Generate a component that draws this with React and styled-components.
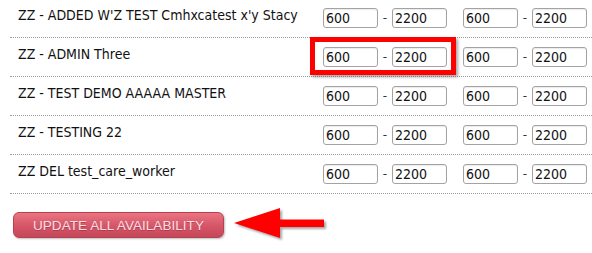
import styled, { createGlobalStyle } from 'styled-components';

const GlobalStyle = createGlobalStyle`
  html, body {
    margin: 0;
    padding: 0;
    background: #fff;
  }
`;

const Page = styled.div`
  width: 592px;
  height: 253px;
  overflow: hidden;
  padding-left: 10px;
  box-sizing: border-box;
`;

const Table = styled.div`
  margin-top: -1px;
`;

const Row = styled.div`
  display: flex;
  align-items: center;
  padding: 9px 5px 9px 8px;
  border-bottom: 1px dotted #9a9a9a;
`;

const Label = styled.div`
  flex: 1;
  padding-bottom: 6px;
  line-height: 14px;
  font-family: 'DejaVu Sans Condensed', 'DejaVu Sans', sans-serif;
  font-size: 14px;
  color: #111;
  white-space: nowrap;
`;

const Ranges = styled.div`
  display: flex;
  gap: 16px;
`;

const Range = styled.div`
  display: flex;
  align-items: center;
  position: relative;
`;

const Highlight = styled.div`
  position: absolute;
  left: -13px;
  right: -9px;
  top: -10px;
  bottom: -8px;
  border: 5px solid #ff0000;
  box-shadow: 2px 2px 3px rgba(0, 0, 0, 0.35);
  pointer-events: none;
`;

const TimeInput = styled.input`
  width: 55px;
  height: 20px;
  box-sizing: border-box;
  border: 1px solid #a3a3a3;
  border-radius: 3px;
  padding: 0 2px;
  font-family: 'DejaVu Sans Condensed', 'DejaVu Sans', sans-serif;
  font-size: 14px;
  color: #111;
  background: #fff;
  box-shadow: inset 0 1px 1px rgba(0, 0, 0, 0.08);
  outline: none;
`;

const Dash = styled.span`
  width: 14px;
  line-height: 14px;
  text-align: center;
  font-family: 'DejaVu Sans', sans-serif;
  font-size: 12px;
  color: #333;
`;

const Footer = styled.div`
  display: flex;
  align-items: center;
  gap: 10px;
  padding: 13px 0 0 3px;
`;

const UpdateButton = styled.button`
  width: 211px;
  height: 26px;
  border: 1px solid #b8404f;
  border-radius: 6px;
  background: linear-gradient(#ea7482, #d55566 55%, #c4475a);
  color: #f6dfe3;
  font-family: 'Liberation Sans', Arial, sans-serif;
  font-size: 13.6px;
  text-shadow: 0 1px 0 rgba(120, 20, 35, 0.35);
  box-shadow: 1px 1px 2px rgba(0, 0, 0, 0.25);
  padding: 0;
  cursor: pointer;
`;

const Arrow = styled.svg`
  display: block;
  margin-top: 0;
  filter: drop-shadow(2px 2px 1px rgba(0, 0, 0, 0.35));
`;

const workers = [
  'ZZ - ADDED W\'Z TEST Cmhxcatest x\'y Stacy',
  'ZZ - ADMIN Three',
  'ZZ - TEST DEMO AAAAA MASTER',
  'ZZ - TESTING 22',
  'ZZ DEL test_care_worker',
];

function TimeRange({ highlighted }) {
  return (
    <Range>
      <TimeInput defaultValue="600" />
      <Dash>-</Dash>
      <TimeInput defaultValue="2200" />
      {highlighted && <Highlight />}
    </Range>
  );
}

export default function App() {
  return (
    <Page>
      <GlobalStyle />
      <Table>
        {workers.map((name, i) => (
          <Row key={name}>
            <Label>{name}</Label>
            <Ranges>
              <TimeRange highlighted={i === 1} />
              <TimeRange />
            </Ranges>
          </Row>
        ))}
      </Table>
      <Footer>
        <UpdateButton>UPDATE ALL AVAILABILITY</UpdateButton>
        <Arrow width="94" height="36" viewBox="0 0 94 36">
          <path d="M0 16 L46 1 L46 12.5 L90 12.5 L90 20 L46 20 L46 31 Z" fill="#ff0000" />
        </Arrow>
      </Footer>
    </Page>
  );
}
